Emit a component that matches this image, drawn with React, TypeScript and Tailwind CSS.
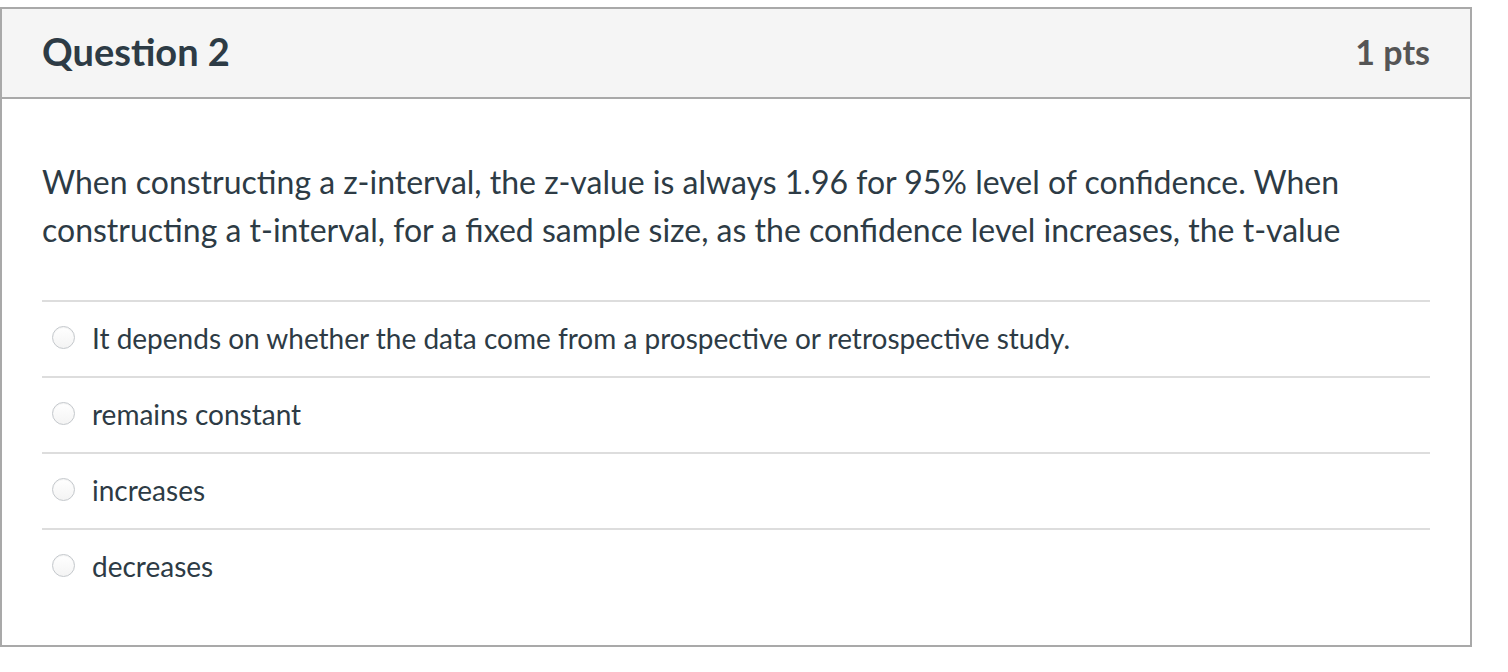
import type { JSX } from "react";

const answers = [
  "It depends on whether the data come from a prospective or retrospective study.",
  "remains constant",
  "increases",
  "decreases",
];

function Radio(): JSX.Element {
  return (
    <span className="h-[23px] w-[23px] shrink-0 rounded-full border border-[#c4c8cc] bg-gradient-to-b from-white to-[#f4f4f4] shadow-[inset_0_1px_1px_rgba(0,0,0,0.05)]" />
  );
}

export default function App(): JSX.Element {
  return (
    <div className="min-h-[672px] bg-white pt-[7px] font-['Lato','Noto_Sans',sans-serif] text-[#2d3b45]">
      <div className="w-[1472px] border-2 border-[#a9a9a9] bg-white">
        <div className="flex h-[90px] items-center justify-between border-b-2 border-[#a9a9a9] bg-[#f5f5f5] px-10 pb-[3px]">
          <h2 className="text-[38px] font-bold">Question 2</h2>
          <span className="text-[34px] font-bold text-[#555555]">1 pts</span>
        </div>
        <div className="px-10 pb-[41px] pt-[59px]">
          <p className="text-[32px] leading-[48px]">
            When constructing a z-interval, the z-value is always 1.96 for 95% level of confidence. When
            constructing a t-interval, for a fixed sample size, as the confidence level increases, the t-value
          </p>
          <div className="mt-[46px]">
            {answers.map((answer) => (
              <label
                key={answer}
                className="flex h-[76px] items-center gap-[17px] border-t-2 border-[#dddddd] pb-[3px] pl-[10px]"
              >
                <Radio />
                <span className="text-[28px]">{answer}</span>
              </label>
            ))}
          </div>
        </div>
      </div>
    </div>
  );
}
